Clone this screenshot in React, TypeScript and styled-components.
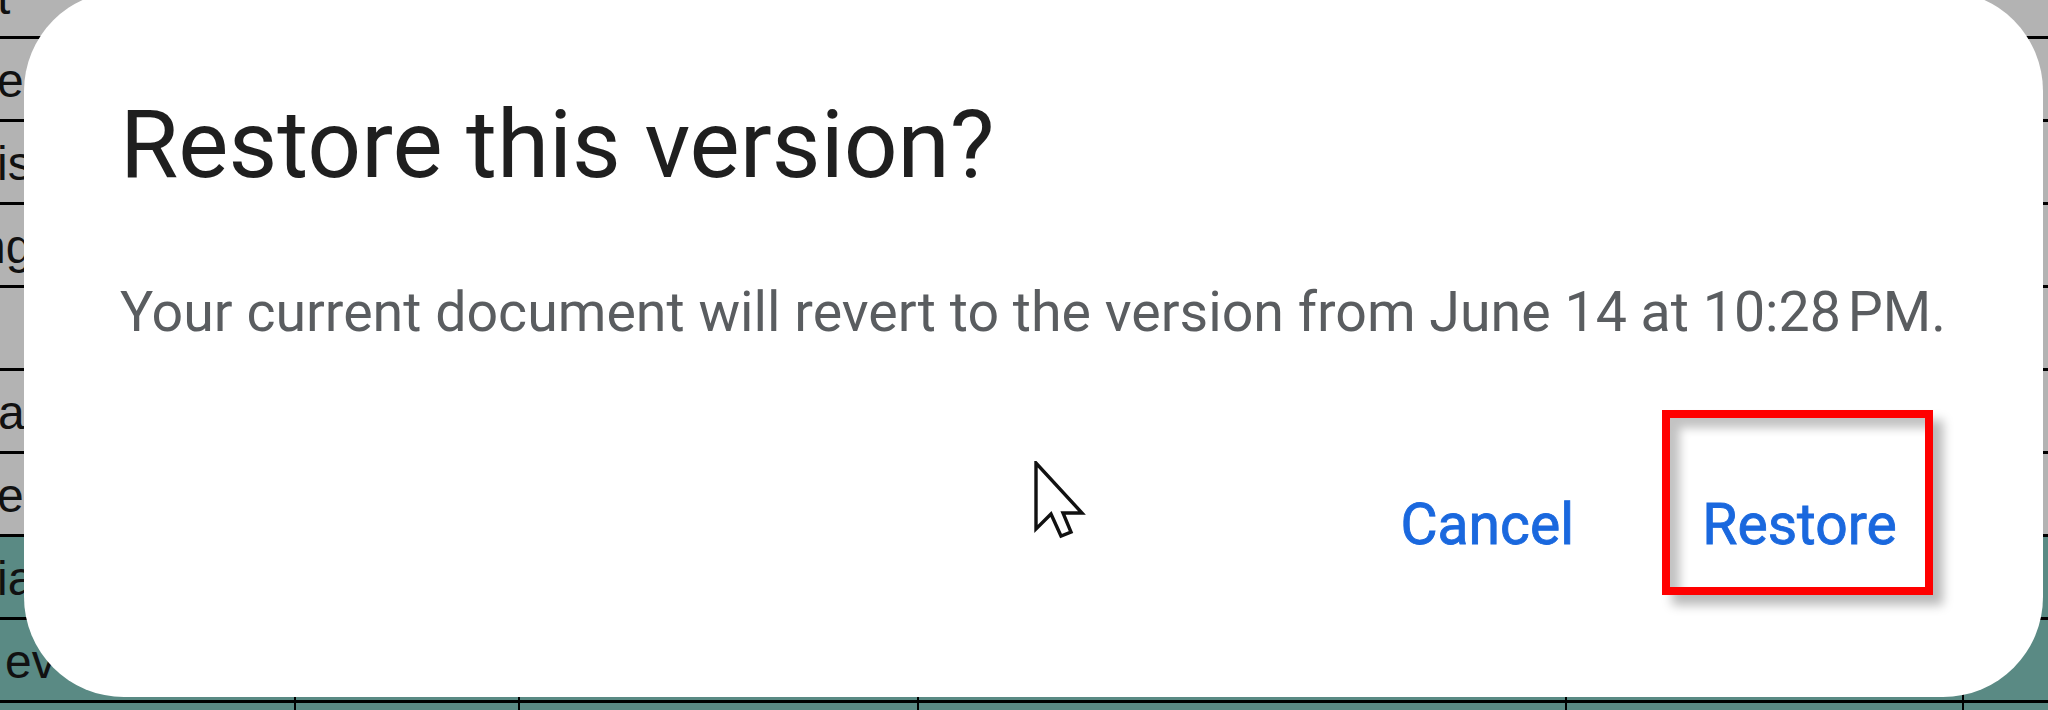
import React from 'react';
import styled, { createGlobalStyle } from 'styled-components';

const GlobalStyle = createGlobalStyle`
  html, body {
    margin: 0;
    padding: 0;
    width: 2048px;
    height: 710px;
    overflow: hidden;
    background: #b3b3b3;
  }
  body {
    font-family: Roboto, "Noto Sans", Arial, sans-serif;
  }
`;

const Page = styled.div`
  position: relative;
  width: 2048px;
  height: 710px;
  overflow: hidden;
`;

/* spreadsheet behind the dialog */
const Sheet = styled.div`
  display: flex;
  flex-direction: column;
  margin-top: -44px;
`;

const Row = styled.div<{ $tone: 'grey' | 'teal' }>`
  display: grid;
  grid-template-columns: 294px 224px 399px 648px 397px 1fr;
  height: 83px;
  box-sizing: border-box;
  border-bottom: 3px solid #000;
  background: ${(p) => (p.$tone === 'teal' ? '#5a8a84' : '#b3b3b3')};
`;

const Cell = styled.div`
  border-left: 2px solid #000;
  overflow: hidden;
`;

const LabelCell = styled.div<{ $indent: number }>`
  overflow: hidden;
  font-family: "Liberation Sans", Arial, sans-serif;
  font-size: 48px;
  line-height: 54px;
  padding-top: 15px;
  color: #111;
  white-space: nowrap;
  text-indent: ${(p) => p.$indent}px;
`;

const Dialog = styled.div`
  position: absolute;
  left: 24px;
  top: -9px;
  width: 2019px;
  height: 706px;
  box-sizing: border-box;
  background: #fff;
  border-radius: 100px;
  padding: 99px 110px 0 96px;
  display: flex;
  flex-direction: column;
`;

const Title = styled.h2`
  margin: 0;
  font-family: Roboto, "Noto Sans", sans-serif;
  font-weight: 400;
  font-size: 94.6px;
  line-height: 110px;
  color: #1f1f1f;
`;

const Message = styled.p`
  margin: 80px 0 0;
  font-family: Roboto, "Noto Sans", sans-serif;
  font-size: 55.5px;
  line-height: 65px;
  color: #5a5d60;
  white-space: nowrap;
`;

const Footer = styled.div`
  margin-top: 65px;
  display: flex;
  justify-content: flex-end;
  align-items: baseline;
`;

const TextButton = styled.button`
  border: none;
  background: transparent;
  padding: 0;
  font-family: Roboto, "Noto Sans", sans-serif;
  font-weight: 400;
  font-size: 57px;
  line-height: 66px;
  color: #1a68de;
  -webkit-text-stroke: 0.9px #1a68de;
  cursor: pointer;
`;

const CancelButton = styled(TextButton)`
  margin-right: 88px;
`;

/* red annotation box drawn around the Restore button */
const Highlight = styled.div`
  width: 271px;
  height: 185px;
  box-sizing: border-box;
  border: 8px solid #ff0000;
  padding: 74px 0 0 4px;
  display: flex;
  justify-content: center;
  align-items: flex-start;
  box-shadow: 10px 10px 10px rgba(0, 0, 0, 0.28), inset 10px 10px 10px rgba(0, 0, 0, 0.24);
`;

const Pointer = styled.svg`
  position: absolute;
  left: 1034px;
  top: 461px;
  width: 54px;
  height: 80px;
`;

type SheetRow = { label: string; indent: number; tone: 'grey' | 'teal' };

const rows: SheetRow[] = [
  { label: 't', indent: -3, tone: 'grey' },
  { label: 'e', indent: -3, tone: 'grey' },
  { label: 'is', indent: -3, tone: 'grey' },
  { label: 'ng', indent: -21, tone: 'grey' },
  { label: '', indent: 0, tone: 'grey' },
  { label: 'a', indent: -2, tone: 'grey' },
  { label: 'e', indent: -3, tone: 'grey' },
  { label: 'ia', indent: -3, tone: 'teal' },
  { label: 'ev', indent: 5, tone: 'teal' },
  { label: '', indent: 0, tone: 'teal' },
];

export default function App() {
  return (
    <Page>
      <GlobalStyle />
      <Sheet>
        {rows.map((r, i) => (
          <Row key={i} $tone={r.tone}>
            <LabelCell $indent={r.indent}>{r.label}</LabelCell>
            <Cell />
            <Cell />
            <Cell />
            <Cell />
            <Cell />
          </Row>
        ))}
      </Sheet>

      <Dialog>
        <Title>Restore this version?</Title>
        <Message>Your current document will revert to the version from June 14 at 10:28{'\u202F'}PM.</Message>
        <Footer>
          <CancelButton>Cancel</CancelButton>
          <Highlight>
            <TextButton>Restore</TextButton>
          </Highlight>
        </Footer>
      </Dialog>

      <Pointer viewBox="-2 -2 54 80">
        <polygon
          points="0,0 0,66 15,51 25,73 35,69 27,50 46,50"
          fill="#fff"
          stroke="#111"
          strokeWidth="3.4"
          strokeLinejoin="miter"
        />
      </Pointer>
    </Page>
  );
}
